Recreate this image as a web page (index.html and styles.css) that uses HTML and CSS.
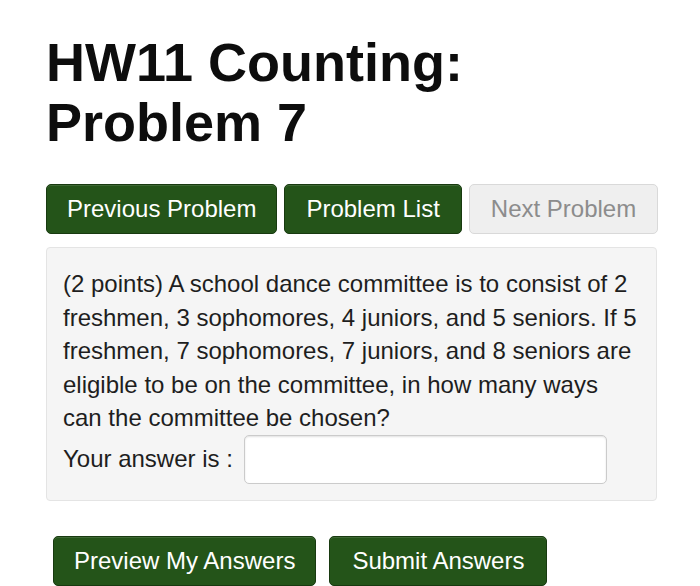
FILE: index.html
```html
<!DOCTYPE html>
<html lang="en">
<head>
<meta charset="utf-8">
<title>HW11 Counting: Problem 7</title>
<link rel="stylesheet" href="styles.css">
</head>
<body>
<div class="page">
  <h1 class="title">HW11 Counting:<br>Problem 7</h1>
  <div class="nav">
    <button class="btn btn-primary" type="button">Previous Problem</button>
    <button class="btn btn-primary" type="button">Problem List</button>
    <button class="btn btn-disabled" type="button" disabled>Next Problem</button>
  </div>
  <div class="problem">
    <p class="problem-text">(2 points) A school dance committee is to consist of 2 freshmen, 3 sophomores, 4 juniors, and 5 seniors. If 5 freshmen, 7 sophomores, 7 juniors, and 8 seniors are eligible to be on the committee, in how many ways can the committee be chosen?</p>
    <div class="answer-row">
      <label class="answer-label" for="ans">Your answer is :</label>
      <input class="answer-input" id="ans" type="text">
    </div>
  </div>
  <div class="submit-row">
    <button class="btn btn-primary" type="button">Preview My Answers</button>
    <button class="btn btn-primary btn-submit" type="button">Submit Answers</button>
  </div>
</div>
</body>
</html>
```

FILE: styles.css
```css
html, body {
  margin: 0;
  padding: 0;
  background: #ffffff;
}

body {
  font-family: "Liberation Sans", Arial, Helvetica, sans-serif;
  color: #1e1e1e;
}

.page {
  padding: 0 0 0 46px;
  width: 611px;
}

.title {
  margin: 32px 0 0 0;
  font-size: 54px;
  line-height: 60px;
  font-weight: bold;
  color: #0d0d0d;
}

.nav {
  display: flex;
  gap: 7px;
  margin-top: 32px;
}

.btn {
  box-sizing: border-box;
  height: 50px;
  padding: 0 21px;
  font-family: "Liberation Sans", Arial, Helvetica, sans-serif;
  font-size: 24px;
  line-height: 48px;
  border-radius: 5px;
  border: 1px solid transparent;
  white-space: nowrap;
}

.nav .btn-primary:first-child {
  padding: 0 20px;
}

.btn-primary {
  background: #245419;
  border-color: #183a10;
  color: #ffffff;
  box-shadow: inset 0 1px 0 rgba(255, 255, 255, 0.12);
}

.btn-disabled {
  background: #efefef;
  border-color: #d9d9d9;
  color: #8c8c8c;
}

.problem {
  margin-top: 13px;
  box-sizing: border-box;
  width: 611px;
  background: #f5f5f5;
  border: 1px solid #e4e4e4;
  border-radius: 4px;
  padding: 19px 15px 16px 16px;
}

.problem-text {
  margin: 0;
  font-size: 24px;
  line-height: 33.5px;
}

.answer-row {
  display: flex;
  align-items: center;
  gap: 11px;
}

.answer-label {
  font-size: 24px;
  line-height: 33.5px;
}

.answer-input {
  box-sizing: border-box;
  width: 363px;
  height: 49px;
  margin: 0;
  background: #ffffff;
  border: 1px solid #cbcbcb;
  border-radius: 5px;
  box-shadow: inset 0 1px 2px rgba(0, 0, 0, 0.12);
  font-size: 24px;
  padding: 0 10px;
}

.submit-row {
  display: flex;
  gap: 13px;
  margin-top: 35px;
  padding-left: 7px;
}

.submit-row .btn {
  padding: 0 20px;
}

.submit-row .btn-submit {
  padding: 0 22px;
}
```
